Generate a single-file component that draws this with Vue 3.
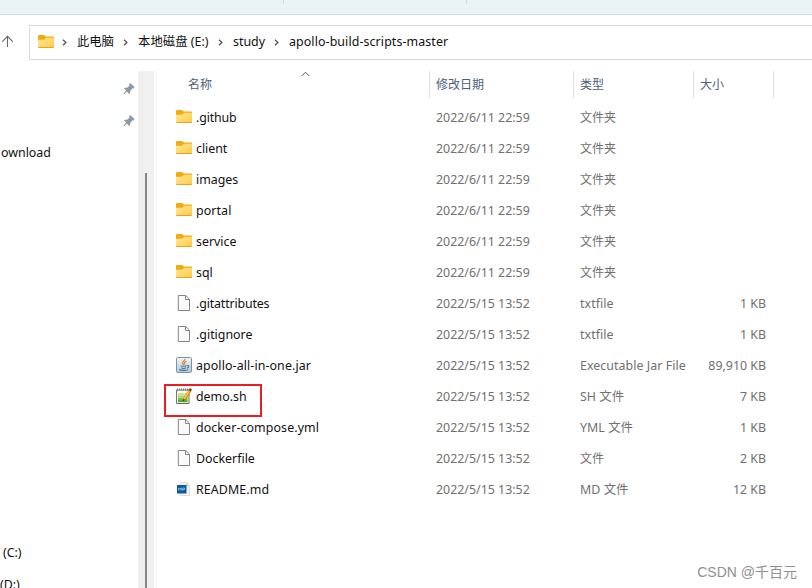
<template>
  <div class="explorer">
    <div class="toolbar">
      <i class="tick first"></i>
      <i class="tick"></i>
    </div>
    <div class="nav">
      <svg class="up" width="14" height="14" viewBox="0 0 14 14">
        <path d="M7.5 12V1.5M2.3 6.6L7.5 1.4L12.7 6.6" fill="none" stroke="#666" stroke-width="1.1" />
      </svg>
      <div class="address">
        <svg class="folder" width="16" height="14" viewBox="0 0 16 14">
          <use href="#folder" />
        </svg>
        <template v-for="crumb in crumbs" :key="crumb.text">
          <svg class="chevron" width="5" height="7" viewBox="0 0 5 7">
            <path d="M1 .7L3.9 3.5L1 6.3" fill="none" stroke="#555" stroke-width="1.3" />
          </svg>
          <span class="crumb" :style="{ width: crumb.width + 'px', letterSpacing: crumb.ls + 'px' }">{{ crumb.text }}</span>
        </template>
      </div>
    </div>
    <div class="main">
      <div class="sidebar">
        <div v-for="n in 2" :key="n" class="pin-row">
          <svg width="12" height="12" viewBox="0 0 12 12">
            <path
              d="M6.3 .8L7.4 .2L11.6 4L10.8 5.3L9.2 5.6L7.2 8.2L7 10.5L6 10.7L3.9 8.5L1.2 11.2L.4 10.8L3 7.7L1.2 5.6L1.5 4.8L4 4.7L6.3 2.7Z"
              fill="#8d9aa3"
            />
          </svg>
        </div>
        <div class="side-item download">ownload</div>
        <div class="side-item drive-c">(C:)</div>
        <div class="side-item drive-d">(D:)</div>
      </div>
      <div class="scrollbar"><div class="thumb"></div></div>
      <div class="content">
        <div class="header">
          <div class="head name">
            名称
            <svg class="sort" width="9" height="6" viewBox="0 0 9 6">
              <path d="M.8 5L4.5 1.2L8.2 5" fill="none" stroke="#555" stroke-width="1" />
            </svg>
          </div>
          <div class="head date">修改日期</div>
          <div class="head type">类型</div>
          <div class="head size">大小</div>
        </div>
        <div v-for="file in files" :key="file.name" class="row" :class="{ marked: file.marked }">
          <div class="cell name">
            <svg class="icon" width="16" height="16" viewBox="0 0 16 16">
              <use :href="'#' + file.icon" :y="file.icon === 'folder' ? 1 : 0" />
            </svg>
            <span :style="{ letterSpacing: file.ls + 'px' }">{{ file.name }}</span>
          </div>
          <div class="cell date">{{ file.date }}</div>
          <div class="cell type" :class="{ cjk: file.type === '文件夹' || file.type === '文件' }">{{ file.type }}</div>
          <div class="cell size">{{ file.size }}</div>
        </div>
      </div>
    </div>
    <div class="watermark">CSDN @千百元</div>

    <svg class="defs" width="0" height="0">
      <defs>
        <linearGradient id="yellow" x1="0" y1="0" x2="1" y2="1">
          <stop offset="0" stop-color="#ffe89b" />
          <stop offset="1" stop-color="#ffca42" />
        </linearGradient>
        <linearGradient id="green" x1="0" y1="0" x2="0" y2="1">
          <stop offset="0" stop-color="#d9ef9b" />
          <stop offset="1" stop-color="#45a513" />
        </linearGradient>
        <linearGradient id="steel" x1="0" y1="0" x2="0" y2="1">
          <stop offset="0" stop-color="#f1f5f9" />
          <stop offset="1" stop-color="#b5c8d9" />
        </linearGradient>
        <g id="folder">
          <path d="M0 1.2Q0 0 1.2 0H6L8 1.6H15Q16 1.6 16 2.6V6H0Z" fill="#f2ab0c" />
          <path d="M0 4.7H6.2L8 2.7H16V12Q16 13 15 13H1Q0 13 0 12Z" fill="url(#yellow)" />
          <path d="M.4 12.5H15.6" stroke="#e5a523" stroke-width="1" />
        </g>
        <g id="page">
          <path d="M2.3 .5H9.8L13.5 4.2V15.5H2.3Z" fill="#fafafa" stroke="#858585" />
          <path d="M9.5 .7V4.5H13.3" fill="none" stroke="#858585" />
        </g>
        <g id="jar">
          <rect x=".5" y=".5" width="15" height="15" rx="1" fill="url(#steel)" stroke="#7d92a7" />
          <path d="M8.9 1.8C9.6 4 5.7 4.4 6.4 6.3L7.8 8M10.4 4.2C7.6 5.1 8.4 6 9 7.4" fill="none" stroke="#ee7928" stroke-width="1.2" />
          <path d="M4.5 8.8C5 9.6 10 9.4 10.8 8.7M5.2 10.8C6.4 11.5 9 11.4 10 10.8M3.2 12.5C5 13.8 10.5 13.6 12 12.6M11.2 8.7C13.7 8.2 13 10.8 11 11" fill="none" stroke="#49759e" stroke-width="1.1" />
        </g>
        <g id="notepad">
          <path d="M.6 2H13V15.5H.6Z" fill="#fff" stroke="#686868" />
          <path d="M2 5H11.6V14.2H2Z" fill="url(#green)" />
          <path d="M2 7.5H11.5M2 9.5H9" stroke="#fff" stroke-opacity=".5" stroke-width=".7" />
          <path d="M1 1.4H12.5" stroke="#777" stroke-width="2" stroke-dasharray="1 1" />
          <path d="M8 11.8L14 2.4" stroke="#d78310" stroke-width="2.9" />
          <path d="M8.2 10.9L13.5 2.6" stroke="#ffd237" stroke-width="1.5" />
          <path d="M13.5 2.9L15 .7" stroke="#9a2824" stroke-width="2.5" />
          <path d="M7.1 13L8.1 11" stroke="#333" stroke-width="1" />
        </g>
        <g id="markdown">
          <path d="M4 1.5H10.3L13.5 4.7V14.5H4Z" fill="#f4f4f4" stroke="#dedede" />
          <path d="M10.3 1.5V4.7H13.5Z" fill="#ccc" />
          <rect x="1" y="4" width="9.5" height="8.5" fill="#0b5a9c" />
          <path d="M2.7 9.7V6.9L4 8.4L5.2 6.9V9.7M6.7 9.7V7H8.6V8.4H6.7" fill="none" stroke="#9dccea" stroke-width=".8" />
        </g>
      </defs>
    </svg>
  </div>
</template>

<script setup>
const crumbs = [
  { text: "此电脑", width: 37, ls: -0.2 },
  { text: "本地磁盘 (E:)", width: 71, ls: 0 },
  { text: "study", width: 32, ls: 0 },
  { text: "apollo-build-scripts-master", width: 170, ls: 0.1 },
];

const folder = (name, ls = 0) => ({
  name,
  ls,
  icon: "folder",
  date: "2022/6/11 22:59",
  type: "文件夹",
});

const file = (name, icon, type, size, extra = {}) => ({
  name,
  icon,
  type,
  size,
  date: "2022/5/15 13:52",
  ls: 0.1,
  ...extra,
});

const files = [
  folder(".github", -0.15),
  folder("client", -0.05),
  folder("images"),
  folder("portal", 0.1),
  folder("service"),
  folder("sql"),
  file(".gitattributes", "page", "txtfile", "1 KB", { ls: -0.15 }),
  file(".gitignore", "page", "txtfile", "1 KB", { ls: 0 }),
  file("apollo-all-in-one.jar", "jar", "Executable Jar File", "89,910 KB"),
  file("demo.sh", "notepad", "SH 文件", "7 KB", { ls: 0, marked: true }),
  file("docker-compose.yml", "page", "YML 文件", "1 KB"),
  file("Dockerfile", "page", "文件", "2 KB", { ls: 0 }),
  file("README.md", "markdown", "MD 文件", "12 KB"),
];
</script>

<style>
body {
  margin: 0;
  overflow: hidden;
}
</style>

<style scoped>
.explorer {
  position: relative;
  box-sizing: border-box;
  width: 812px;
  height: 588px;
  overflow: hidden;
  display: flex;
  flex-direction: column;
  background: #fff;
  color: #111;
  font-family: "Noto Sans", "Noto Sans CJK SC", sans-serif;
  font-size: 12.4px;
  white-space: nowrap;
}

.toolbar {
  display: flex;
  height: 14px;
  flex: none;
  background: #eaf4f7;
  border-bottom: 1px solid #d7dee1;
}

.tick {
  width: 1px;
  height: 4px;
  margin-left: 182px;
  background: #d5dfe2;
}

.tick.first {
  margin-left: 283px;
}

.nav {
  display: flex;
  flex: none;
  height: 56px;
}

.up {
  margin: 20px 15px 0 0;
}

.address {
  box-sizing: border-box;
  display: flex;
  align-items: center;
  flex: 1;
  height: 35px;
  margin-top: 10px;
  padding-left: 8px;
  border: 1px solid #d9d9d9;
  border-right: 0;
}

.folder {
  margin-bottom: 1px;
}

.chevron {
  margin: 0 10px 0 8px;
}

.crumb {
  line-height: 18px;
  margin-bottom: 1px;
}

.crumb + .chevron {
  margin-left: 9px;
}

.main {
  display: flex;
  flex: 1;
}

.sidebar {
  width: 138px;
  display: flex;
  flex-direction: column;
}

.pin-row {
  display: flex;
  align-items: center;
  justify-content: flex-end;
  height: 32px;
  padding-right: 3px;
}

.pin-row:first-child {
  margin-top: 2px;
}

.side-item {
  height: 20px;
  line-height: 20px;
}

.download {
  margin: 6px 0 0 1px;
}

.drive-c {
  margin: 380px 0 0 3px;
}

.drive-d {
  margin-top: 12px;
}

.scrollbar {
  width: 16px;
  background: #f0f0f0;
}

.thumb {
  width: 2px;
  height: 415px;
  margin: 102px 0 0 7px;
  background: #858585;
}

.content {
  flex: 1;
  margin-left: 2px;
  border-left: 1px solid #f3f3f3;
}

.header {
  display: flex;
  height: 27px;
  margin-bottom: 4px;
  color: #4c607a;
  font-size: 12px;
  line-height: 27px;
}

.head {
  box-sizing: border-box;
  border-right: 1px solid #e2e2e2;
  padding-left: 6px;
}

.head.name {
  position: relative;
  width: 273px;
  padding-left: 31px;
}

.sort {
  position: absolute;
  left: 144px;
  top: 0;
}

.date {
  width: 144px;
}

.type {
  width: 120px;
}

.size {
  width: 80px;
}

.row {
  position: relative;
  display: flex;
  height: 31px;
  line-height: 31px;
  color: #707070;
}

.cell {
  box-sizing: border-box;
  padding-left: 6px;
}

.cell.name {
  display: flex;
  align-items: center;
  gap: 4px;
  width: 273px;
  padding-left: 19px;
  color: #111;
}

.cell.type {
  letter-spacing: 0.05px;
}

.cell.type.cjk {
  font-size: 12px;
  letter-spacing: 0;
}

.cell.size {
  padding: 0 8px 0 0;
  text-align: right;
}

.icon {
  flex: none;
  margin-bottom: 1px;
}

.marked::after {
  content: "";
  position: absolute;
  box-sizing: border-box;
  left: 7px;
  top: 3px;
  width: 98px;
  height: 33px;
  border: 2px solid #e91d24;
}

.watermark {
  position: absolute;
  right: 15px;
  bottom: 6px;
  color: #909090;
  font-family: "Liberation Sans", "Noto Sans CJK SC", sans-serif;
  font-size: 14px;
  line-height: 20px;
}

.defs {
  position: absolute;
}
</style>
